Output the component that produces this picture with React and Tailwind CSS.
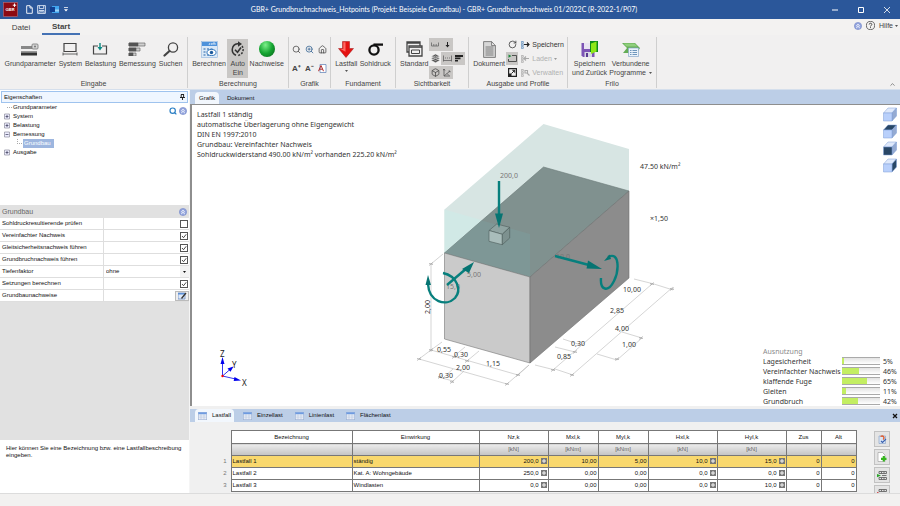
import { useState } from 'react';
import { Search, ZoomIn, House, ChevronUp, Box, RotateCw } from 'lucide-react';

const caseColumns = [
  { key: 'name', label: 'Bezeichnung', unit: '', width: 'w-[121px]', align: 'text-left' },
  { key: 'action', label: 'Einwirkung', unit: '', width: 'w-[127px]', align: 'text-left' },
  { key: 'nz', label: 'Nz,k', unit: '[kN]', width: 'w-[69px]', align: 'text-right', plus: true },
  { key: 'mx', label: 'Mxl,k', unit: '[kNm]', width: 'w-[50px]', align: 'text-right' },
  { key: 'my', label: 'Myl,k', unit: '[kNm]', width: 'w-[50px]', align: 'text-right' },
  { key: 'hx', label: 'Hxl,k', unit: '[kN]', width: 'w-[69px]', align: 'text-right', plus: true },
  { key: 'hy', label: 'Hyl,k', unit: '[kN]', width: 'w-[69px]', align: 'text-right', plus: true },
  { key: 'zus', label: 'Zus', unit: '', width: 'w-[35px]', align: 'text-right' },
  { key: 'alt', label: 'Alt', unit: '', width: 'w-[35px]', align: 'text-right' },
];

const loadCases = [
  { name: 'Lastfall 1', action: 'ständig', nz: '200,0', mx: '10,00', my: '5,00', hx: '10,0', hy: '15,0', zus: '0', alt: '0' },
  { name: 'Lastfall 2', action: 'Kat. A: Wohngebäude', nz: '250,0', mx: '0,00', my: '0,00', hx: '0,0', hy: '0,0', zus: '0', alt: '0' },
  { name: 'Lastfall 3', action: 'Windlasten', nz: '0,0', mx: '0,00', my: '0,00', hx: '0,0', hy: '10,0', zus: '0', alt: '0' },
];

const utilisation = [
  { label: 'Lagesicherheit', value: 5 },
  { label: 'Vereinfachter Nachweis', value: 46 },
  { label: 'klaffende Fuge', value: 65 },
  { label: 'Gleiten', value: 11 },
  { label: 'Grundbruch', value: 42 },
];

export default function App() {
  const [viewTab, setViewTab] = useState('Grafik');
  const [loadTab, setLoadTab] = useState('Lastfall');
  const [selected, setSelected] = useState(0);

  return (
    <div className="flex h-screen flex-col overflow-hidden bg-[#f0f0f0] font-['Liberation_Sans',sans-serif] text-[7px] leading-[9px] text-[#444]">
      <TitleBar />
      <Ribbon />
      <div className="flex min-h-0 flex-1">
        <Sidebar />
        <main className="flex min-w-0 flex-1 flex-col">
          <div className="flex h-[14px] shrink-0 items-end bg-[#bccee7] pl-[5px] text-[6px] text-[#111]">
            {['Grafik', 'Dokument'].map((tab) => (
              <button
                key={tab}
                onClick={() => setViewTab(tab)}
                className={`mr-1 h-3 rounded-t-sm px-1 ${viewTab === tab ? 'bg-[#f2f7fd]' : ''}`}
              >
                {tab}
              </button>
            ))}
          </div>
          <Viewport />
          <div className="mt-[3px] flex h-[13px] shrink-0 items-center bg-[#bccee7] pl-[5px] pr-[2px] text-[6px] text-[#111]">
            {['Lastfall', 'Einzellast', 'Linienlast', 'Flächenlast'].map((tab) => (
              <button
                key={tab}
                onClick={() => setLoadTab(tab)}
                className={`mr-[6px] flex h-full items-center gap-[5px] rounded-t-sm px-[3px] ${loadTab === tab ? 'bg-[#f2f7fd]' : ''}`}
              >
                <TableIcon />
                {tab}
              </button>
            ))}
            <button className="ml-auto" aria-label="Schließen">
              <svg className="h-[6px] w-[6px]" viewBox="0 0 6 6" stroke="#111" strokeWidth="1.3">
                <path d="M1 1l4 4M5 1l-4 4" />
              </svg>
            </button>
          </div>
          <div className="flex h-[71px] shrink-0 justify-between overflow-hidden pl-7 pr-[10px] pt-2">
            <LoadTable selected={selected} onSelect={setSelected} />
            <RowTools />
          </div>
        </main>
      </div>
      <footer className="h-[13px] shrink-0 border-t border-[#dcdcdc] bg-[#f2f1f0]" />
    </div>
  );
}

function TitleBar() {
  return (
    <header className="flex h-[19px] shrink-0 items-center bg-[#2b579a] font-['Lato',sans-serif] text-white">
      <div className="flex w-[78px] items-center gap-1 pl-[3px]">
        <svg className="mr-1 h-[15px] w-[15px]" viewBox="0 0 15 15">
          <rect x=".5" y=".5" width="14" height="14" fill="#8d0a12" stroke="#c06a70" strokeWidth=".6" />
          <text x="2.5" y="9" fontSize="4.5" fontWeight="bold" fill="#fff">GBR</text>
          <path d="M11.5 1.5v3.4M9.8 3.2h3.4" stroke="#fff" strokeWidth="1" />
        </svg>
        <svg className="h-[9px] w-[7px]" viewBox="0 0 7 9" fill="none" stroke="#fff" strokeWidth=".9">
          <path d="M.7.7h3.4l2.2 2.2v5.4H.7zM4 .8V3h2.2" />
        </svg>
        <svg className="h-[9px] w-[9px]" viewBox="0 0 9 9" fill="none" stroke="#dce6f5" strokeWidth=".9">
          <path d="M.6.6h7.8v7.8H.6zM2.3.6v3h4.4v-3M2 8.4V5.5h5v2.9M3 6.8h3" />
        </svg>
        <svg className="h-[9px] w-[9px]" viewBox="0 0 9 9">
          <rect x="2" y="1" width="7" height="7" fill="#41a5ee" />
          <rect x="2" y="4.5" width="7" height="2" fill="#9bd3f8" />
          <rect y="2" width="5" height="5" fill="#103f91" />
        </svg>
        <svg className="ml-px h-[5px] w-[4px]" viewBox="0 0 4 5" fill="#fff">
          <path d="M0 .3h4v.8H0zM0 2.2h4L2 4.5z" />
        </svg>
      </div>
      <h1 className="flex-1 text-center text-[7px]">
        GBR+ Grundbruchnachweis_Hotpoints (Projekt: Beispiele Grundbau) - GBR+ Grundbruchnachweis 01/2022C (R-2022-1/P07)
      </h1>
      <div className="flex w-[90px] items-center justify-end gap-5 pr-[10px]">
        <button aria-label="Minimieren"><svg className="h-[6px] w-[6px]" viewBox="0 0 6 6" stroke="#fff"><path d="M0 3h6" /></svg></button>
        <button aria-label="Maximieren"><svg className="h-[6px] w-[6px]" viewBox="0 0 6 6" fill="none" stroke="#fff"><path d="M.5.5h5v5h-5z" /></svg></button>
        <button aria-label="Schließen"><svg className="h-[6px] w-[6px]" viewBox="0 0 6 6" stroke="#fff" strokeWidth=".8"><path d="M0 0l6 6M6 0L0 6" /></svg></button>
      </div>
    </header>
  );
}

function Group({ label, width, children }) {
  return (
    <section className={`flex h-[51px] shrink-0 flex-col justify-between border-r border-[#cfcfcf] ${width}`}>
      <div className="flex flex-1 items-start justify-around px-[3px] pt-px">{children}</div>
      <h2 className="text-center">{label}</h2>
    </section>
  );
}

function BigButton({ lines, icon, active, arrow }) {
  return (
    <button className={`mt-px flex h-[39px] flex-col items-center whitespace-nowrap px-[1px] ${active ? 'w-[21px] bg-[#c9c7c5]' : ''}`}>
      <span className="flex h-5 items-center justify-center">{icon}</span>
      {lines.map((line, i) => (
        <span key={line} className="flex items-center gap-[3px]">
          {line}
          {arrow === 'inline' && i === lines.length - 1 && <Caret />}
        </span>
      ))}
      {arrow === 'below' && <span className="mt-[2px]"><Caret /></span>}
    </button>
  );
}

function Caret({ color = '#555' }) {
  return <svg className="h-[2px] w-[3px]" viewBox="0 0 3 2" fill={color}><path d="M0 0h3L1.5 2z" /></svg>;
}

function Ribbon() {
  return (
    <>
      <nav className="flex h-4 shrink-0 items-end bg-[#f3f2f1] pl-1 text-[8px]">
        <button className="h-full w-[34px]">Datei</button>
        <button className="ml-1 h-full w-[38px] border-b-2 border-[#4472b4] font-bold">Start</button>
        <div className="ml-auto flex items-center gap-1 self-start pr-[2px] pt-[2px] text-[7px]">
          <CollapseIcon />
          <svg className="h-[9px] w-[9px]" viewBox="0 0 9 9" fill="none" stroke="#333" strokeWidth=".7">
            <circle cx="4.5" cy="4.5" r="4.1" />
            <path d="M3.2 3.5c0-1.7 2.6-1.7 2.6 0 0 1-1.3 1-1.3 2M4.5 6.2v.9" strokeWidth=".9" />
          </svg>
          <a href="#hilfe" className="flex items-center gap-[2px]">Hilfe <Caret /></a>
        </div>
      </nav>
      <div className="flex h-[55px] shrink-0 items-start border-b border-[#d5dfec] bg-[#f1f0f0] pt-[2px]">
        <Group label="Eingabe" width="w-[188px]">
          <BigButton lines={['Grundparameter']} icon={<ParamIcon />} />
          <BigButton lines={['System']} icon={<SystemIcon />} />
          <BigButton lines={['Belastung']} icon={<LoadIcon />} />
          <BigButton lines={['Bemessung']} icon={<DesignIcon />} />
          <BigButton
            lines={['Suchen']}
            icon={
              <svg className="h-[15px] w-4" viewBox="0 0 16 15" fill="none" stroke="#444">
                <circle cx="10" cy="5.5" r="4.6" strokeWidth="1.3" />
                <path d="M6.5 9L1.5 13.5" strokeWidth="2.2" strokeLinecap="round" />
              </svg>
            }
          />
        </Group>
        <Group label="Berechnung" width="w-[101px]">
          <BigButton lines={['Berechnen']} icon={<CalcIcon />} />
          <BigButton lines={['Auto', 'Ein']} icon={<AutoIcon />} active />
          <BigButton
            lines={['Nachweise']}
            icon={<span className="h-4 w-4 rounded-full bg-radial-[at_40%_25%] from-[#7df08a] via-[#16a532] to-[#065c17]" />}
          />
        </Group>
        <Group label="Grafik" width="w-[42px]">
          <div className="grid grid-cols-3 gap-x-1 gap-y-[10px] pt-[7px] text-[#444]">
            <button aria-label="Zoom"><Search className="h-[9px] w-[9px]" /></button>
            <button aria-label="Vergrößern"><ZoomIn className="h-[9px] w-[9px]" color="#2f5f8f" /></button>
            <button aria-label="Gesamtansicht"><House className="h-[9px] w-[9px]" /></button>
            <button className="text-left text-[8px] font-bold leading-[8px]">A⁺</button>
            <button className="text-left text-[8px] font-bold leading-[8px]">A⁻</button>
            <button aria-label="Schrift">
              <svg className="h-[9px] w-[9px]" viewBox="0 0 9 9" fill="none">
                <path d="M2 .5h6v8H2z" fill="#fff" stroke="#5a7cb5" strokeWidth=".7" />
                <path d="M.5 7.2L3 1.5l2.5 5.7M1.4 5.2h3.2" stroke="#b02a2a" />
              </svg>
            </button>
          </div>
        </Group>
        <Group label="Fundament" width="w-[65px]">
          <BigButton
            lines={['Lastfall']}
            arrow="below"
            icon={
              <svg className="h-[17px] w-4" viewBox="0 0 16 17">
                <path d="M4.5.5h7v7h4L8 16.5.5 7.5h4z" fill="#e51212" stroke="#9e1414" strokeWidth=".5" />
                <path d="M5.3 1.2h2.2v9.5L2.4 8.1h2.9z" fill="#ff6a63" />
              </svg>
            }
          />
          <BigButton
            lines={['Sohldruck']}
            icon={
              <svg className="h-[14px] w-[15px]" viewBox="0 0 15 14" fill="none" stroke="#111">
                <ellipse cx="6" cy="8" rx="4.6" ry="4.6" strokeWidth="2.3" />
                <path d="M5.5 2.6H15" strokeWidth="2.3" />
              </svg>
            }
          />
        </Group>
        <Group label="Sichtbarkeit" width="w-[73px]">
          <BigButton lines={['Standard']} icon={<StandardIcon />} />
          <VisibilityGrid />
        </Group>
        <Group label="Ausgabe und Profile" width="w-[99px]">
          <BigButton lines={['Dokument']} icon={<DocIcon />} />
          <div className="flex flex-col gap-px text-[#333]">
            <ProfileRow label="Speichern" icon={<RotateCw className="h-[9px] w-[9px]" />} arrow="M3 3.5h5M6 1.5l2 2-2 2" />
            <ProfileRow label="Laden" muted caret icon={<FrameIcon />} arrow="M8 3.5H3M5 1.5l-2 2 2 2" />
            <ProfileRow label="Verwalten" muted icon={<ExpandIcon />} arrow="M4 1.5h2.5v2.5H4zM6 4l2.5 2.5" />
          </div>
        </Group>
        <Group label="Frilo" width="w-[89px]">
          <BigButton lines={['Speichern', 'und Zurück']} icon={<SaveBackIcon />} />
          <BigButton lines={['Verbundene', 'Programme']} arrow="inline" icon={<LinkedIcon />} />
        </Group>
        <button className="ml-auto mr-1 self-end pb-[1px]" aria-label="Menüband reduzieren"><ChevronUp className="h-[7px] w-[7px]" /></button>
      </div>
    </>
  );
}

function ProfileRow({ icon, label, arrow, muted, caret }) {
  const tone = muted ? '#a8a8a8' : '#222';
  return (
    <div className="flex h-[13px] items-center gap-[3px]">
      <button aria-label={`${label} Profil`} className={`flex h-[13px] w-[12px] items-center justify-center ${caret ? 'bg-[#c9c7c5]' : ''}`}>
        {icon}
      </button>
      <button className={`flex items-center gap-[2px] ${muted ? 'text-[#b0b0b0]' : ''}`}>
        <svg className="h-[8px] w-[9px]" viewBox="0 0 9 8" fill="none" stroke={tone}>
          <path d="M.3.5h2v1.7h-2zM.3 3h2v1.7h-2zM.3 5.7h2v1.7h-2z" strokeWidth=".6" stroke={muted ? '#999' : '#3c77b0'} />
          <path d={arrow} strokeWidth="1.1" />
        </svg>
        {label}
        {caret && <Caret color="#999" />}
      </button>
    </div>
  );
}

function VisibilityGrid() {
  const cell = 'flex h-[13px] w-3 items-center justify-center';
  const on = 'bg-[#c9c7c5]';
  return (
    <div className="grid grid-cols-3 gap-y-[1px] text-[#444]">
      <button aria-label="Bemaßung" className={`${cell} ${on}`}>
        <svg className="h-[5px] w-[8px]" viewBox="0 0 8 5" fill="none" stroke="#666" strokeWidth=".8"><path d="M.5.5v3.5h7V.5M2.8 2v2M5.2 2v2" /></svg>
      </button>
      <button aria-label="Lasten" className={`${cell} ${on}`}>
        <svg className="h-[6px] w-[5px]" viewBox="0 0 5 6" fill="#222"><path d="M2 0h1v3h1.5l-2 2.5-2-2.5H2z" /></svg>
      </button>
      <span />
      <button aria-label="Schichten" className={cell}>
        <svg className="h-[9px] w-[9px]" viewBox="0 0 9 9" fill="#555" stroke="#f1f0f0" strokeWidth=".5">
          <path d="M4.5 4L9 6.2 4.5 8.8 0 6.2zM4.5 2L9 4.2 4.5 6.5 0 4.2zM4.5 0L8.5 2.2 4.5 4.3.5 2.2z" />
        </svg>
      </button>
      <button aria-label="Werte" className={`${cell} ${on}`}>
        <svg className="h-[7px] w-[9px]" viewBox="0 0 9 7" fill="none" stroke="#555" strokeWidth=".7"><path d="M.5.5v6M8.5.5v6M.5 5.5h8M2 3h1M4 3h1M6 3h1" /></svg>
      </button>
      <button aria-label="Ausnutzung" className={`${cell} ${on}`}>
        <svg className="h-[7px] w-[8px]" viewBox="0 0 8 7" fill="#222"><path d="M0 0h8v2H0zM0 2.6h5.5v1.6H0zM0 5h3v1.5H0z" /></svg>
      </button>
      <button aria-label="Körper" className={`${cell} ${on}`}><Box className="h-[9px] w-[9px]" /></button>
      <button aria-label="Achsen" className={`${cell} ${on}`}>
        <svg className="h-[8px] w-[8px]" viewBox="0 0 8 8" fill="none" stroke="#555" strokeWidth=".8"><path d="M1 0v7l6-5M1 7h6M0 1.5L1 0l1 1.5M5.5 2H7v1.3M4 4.5l2 2" /></svg>
      </button>
    </div>
  );
}

function ParamIcon() {
  return (
    <svg className="h-[13px] w-[18px]" viewBox="0 0 18 13">
      <rect x="0" y="3" width="12" height="3" fill="#888" />
      <rect x="11" y="1" width="6" height="5" rx="1" fill="#d5d5d5" stroke="#777" strokeWidth=".8" />
      <circle cx="14" cy="3.5" r="1" fill="#777" />
      <rect y="8" width="16" height="1.5" fill="#999" />
      <rect y="9.5" width="16" height="3" fill="#333" />
    </svg>
  );
}

function SystemIcon() {
  return (
    <svg className="h-[14px] w-4" viewBox="0 0 16 14" fill="none" stroke="#444">
      <path d="M2 1.5h12v8H2z" strokeWidth="1.2" />
      <path d="M1 12h14M1 10.5v3M15 10.5v3" strokeWidth=".8" />
    </svg>
  );
}

function LoadIcon() {
  return (
    <svg className="h-[14px] w-4" viewBox="0 0 16 14" fill="none" stroke="#444">
      <path d="M6 4H1.5v8h13V4H10" strokeWidth="1.2" />
      <path d="M8 1v5" stroke="#0b8a83" strokeWidth="1.4" />
      <path d="M5.5 5h5L8 8.5z" fill="#0b8a83" stroke="none" />
    </svg>
  );
}

function DesignIcon() {
  return (
    <svg className="h-[14px] w-[18px]" viewBox="0 0 18 14" stroke="#555" strokeWidth=".6">
      <path d="M1 1h16v3H1zM1 6h11v3H1zM1 11h7v3H1z" fill="#d0d0d0" />
      <path d="M1 1h9v3H1zM1 6h7v3H1zM1 11h4v3H1z" fill="#555" />
    </svg>
  );
}

function CalcIcon() {
  return (
    <svg className="h-[17px] w-[17px]" viewBox="0 0 17 17">
      <rect x=".5" y=".5" width="16" height="16" fill="#dbe9f7" stroke="#8eb3dc" strokeWidth=".6" />
      <rect x="1" y="1" width="15" height="4" fill="#4e92db" />
      <path d="M8 4l1-2M10 4l1-2M12 4V2h2v2" stroke="#fff" strokeWidth=".7" fill="none" />
      <path d="M2.5 7h2v2h-2zM6 7h2v2H6zM9.5 7h2v2h-2zM2.5 10h2v2h-2zM2.5 13h2v2h-2zM6 13h2v2H6z" fill="#7fa5d0" />
      <ellipse cx="10.5" cy="11.5" rx="4.5" ry="3" fill="#fff" stroke="#2b71b8" strokeWidth="1" />
      <circle cx="10.5" cy="11.5" r="1.7" fill="#1c5a9c" />
    </svg>
  );
}

function AutoIcon() {
  return (
    <svg className="h-[16px] w-[14px]" viewBox="0 0 14 16" fill="none" stroke="#333">
      <path d="M5 14.3A6 6 0 0 1 6.5 2.8h2" strokeWidth="1.5" />
      <path d="M7 .3l4 2.7-4 2.7z" fill="#333" stroke="none" />
      <path d="M11 5a6 6 0 0 1-4.5 9.5" strokeWidth="1.5" strokeDasharray="2 1.3" />
      <path d="M4 8.7l2.5 2.5L10 6.5" strokeWidth="1.6" />
    </svg>
  );
}

function StandardIcon() {
  return (
    <svg className="h-4 w-[17px]" viewBox="0 0 17 16" stroke="#444" fill="#f1f0f0">
      <path d="M1 1h13v10H1zM1 2h13" strokeWidth="1.3" />
      <path d="M3 5h13v10H3z" strokeWidth="1.3" />
      <path d="M3 6.3h13M5.5 9h8v3.5h-8z" />
    </svg>
  );
}

function DocIcon() {
  return (
    <svg className="h-[17px] w-[13px]" viewBox="0 0 13 17" fill="#d7d7d7" stroke="#666" strokeWidth=".8">
      <path d="M.6.6h8l3.8 4v11.8H.6zM8.6.6v4h3.8" />
      <path d="M2.5 6h8M2.5 8h8M2.5 10h8M2.5 12h8M2.5 14h8" />
    </svg>
  );
}

function FrameIcon() {
  return (
    <svg className="h-[9px] w-[9px]" viewBox="0 0 9 9" fill="none" stroke="#333" strokeWidth=".8">
      <path d="M4 1.5h4.5v6h-8V5" />
      <path d="M.5.5L3.5 2 .5 3.8z" fill="#1e8a3c" stroke="none" />
    </svg>
  );
}

function ExpandIcon() {
  return (
    <svg className="h-[9px] w-[9px]" viewBox="0 0 9 9" fill="none" stroke="#222">
      <path d="M.6.6h7.8v7.8H.6z" strokeWidth="1.2" />
      <path d="M1 5.5h2.5V8H1z" fill="#222" stroke="none" />
      <path d="M3.5 5.5l3-3M4.3 2.3h2.4v2.4" strokeWidth="1" />
    </svg>
  );
}

function SaveBackIcon() {
  return (
    <svg className="h-[17px] w-[17px]" viewBox="0 0 17 17">
      <path d="M.5 2h13v14H2L.5 14.5z" fill="#7d55b5" />
      <path d="M3 2h8v6H3z" fill="#e9e4f2" />
      <path d="M3.5 11h7.5v5H3.5z" fill="#d8d8e4" />
      <path d="M5 12h2v4H5z" fill="#5a3a90" />
      <path d="M9 0h8v11H9z" fill="#0f8c1b" />
      <path d="M10 2.5L15.5.5v10L10 13z" fill="#8ee817" />
    </svg>
  );
}

function LinkedIcon() {
  return (
    <svg className="h-[15px] w-[18px]" viewBox="0 0 18 15">
      <path d="M0 1h13l5 5-3 5H1l4-5z" fill="#64ad55" />
      <path d="M1.5 1.5h11l3 3h-11z" fill="#8fcf7d" />
      <path d="M6.5 6h10v8.5h-10z" fill="#eaf2fa" stroke="#8aa9cc" strokeWidth=".7" />
      <path d="M8 8.5h1.5M8 10.5h1.5M8 12.5h1.5M10.5 8.5H15M10.5 10.5H15M10.5 12.5H15" stroke="#4d7cab" strokeWidth=".8" />
    </svg>
  );
}

function TableIcon() {
  return (
    <svg className="h-[8px] w-[9px]" viewBox="0 0 9 8">
      <rect x=".3" y=".3" width="8.4" height="7.4" fill="#f3f6fb" stroke="#9aaed0" strokeWidth=".6" />
      <rect x=".3" y=".3" width="8.4" height="2" fill="#6e9be0" />
      <path d="M.3 4h8.4M.3 5.8h8.4M3 2v5.7M6 2v5.7" stroke="#b4c2dc" strokeWidth=".6" />
    </svg>
  );
}

function CollapseIcon() {
  return (
    <svg className="h-[8px] w-[8px]" viewBox="0 0 8 8" fill="none" stroke="#fff">
      <circle cx="4" cy="4" r="3.6" fill="#93a5dd" stroke="#7387c8" strokeWidth=".6" />
      <path d="M2.2 4L4 2.3 5.8 4M2.2 6L4 4.3 5.8 6" strokeWidth=".9" />
    </svg>
  );
}

function TreeItem({ label, mark }) {
  return (
    <li className="flex h-[9px] items-center">
      {mark ? (
        <svg className="mr-[2px] h-[9px] w-[7px]" viewBox="0 0 7 9" fill="none" stroke="#8b8b9b" strokeWidth=".7">
          <path d="M.5 2h5v5h-5z" fill="#eef" />
          <path d={mark === '+' ? 'M1.5 4.5h3M3 3v3' : 'M1.5 4.5h3'} stroke="#335" />
        </svg>
      ) : (
        <span className="mr-[1px] ml-[3px] w-[5px] border-t border-dotted border-[#aaa]" />
      )}
      <button className="text-left">{label}</button>
    </li>
  );
}

function Sidebar() {
  return (
    <aside className="flex w-[190px] shrink-0 flex-col border-r border-[#f5f5f5] bg-white text-[6px] text-[#111]">
      <div className="mx-px mt-px flex h-3 shrink-0 items-center justify-between border border-[#9fc3ee] bg-[#eff6ff] px-[2px]">
        Eigenschaften
        <svg className="h-[6px] w-[5px]" viewBox="0 0 5 6" fill="none" stroke="#111" strokeWidth=".9"><path d="M1 .5h3M1.2.5v3M3.6.5v3M0 3.5h5M2.5 3.5V6" /></svg>
      </div>
      <div className="flex h-[102px] shrink-0 items-start justify-between pl-1 pr-[2px]">
        <ul>
          <TreeItem label="Grundparameter" />
          <TreeItem label="System" mark="+" />
          <TreeItem label="Belastung" mark="+" />
          <TreeItem label="Bemessung" mark="-" />
          <li className="flex h-[9px] items-center pl-[13px]">
            <span className="mr-[1px] h-[5px] w-[5px] self-start border-b border-l border-dotted border-[#aaa]" />
            <button className="h-[9px] bg-[#9db6df] pl-[1px] pr-[3px] text-white">Grundbau</button>
          </li>
          <TreeItem label="Ausgabe" mark="+" />
        </ul>
        <div className="flex items-center gap-[2px] pt-1">
          <Search className="h-[8px] w-[8px]" color="#2b7fc4" strokeWidth={3.5} />
          <CollapseIcon />
        </div>
      </div>
      <div className="flex h-[13px] shrink-0 items-center justify-between bg-[#e1e1e1] pl-[2px] pr-[2px] text-[7px] text-[#666]">
        Grundbau
        <CollapseIcon />
      </div>
      <div className="bg-[#e1e1e1]">
        <CheckRow id="sohl" label="Sohldruckresultierende prüfen" />
        <CheckRow id="vereinf" label="Vereinfachter Nachweis" on />
        <CheckRow id="gleit" label="Gleitsicherheitsnachweis führen" on />
        <CheckRow id="grund" label="Grundbruchnachweis führen" on />
        <PropRow id="tiefe" label="Tiefenfaktor">
          <span className="relative flex flex-1 items-center">
            <select id="tiefe" className="h-full w-full appearance-none bg-transparent pl-[2px]" defaultValue="ohne">
              <option>ohne</option>
              <option>mit</option>
            </select>
            <span className="pointer-events-none absolute right-0 flex h-full w-[9px] items-center justify-center bg-[#f3f3f3]"><Caret color="#111" /></span>
          </span>
        </PropRow>
        <CheckRow id="setz" label="Setzungen berechnen" on />
        <PropRow id="nachweise" label="Grundbaunachweise">
          <button id="nachweise" className="ml-auto flex h-[10px] w-[14px] items-center justify-center self-center border border-[#bbb] bg-[#eee]">
            <svg className="h-[8px] w-[9px]" viewBox="0 0 9 8">
              <path d="M0 1h7v6H0z" fill="#dfe9f7" stroke="#5b83bd" strokeWidth=".7" />
              <path d="M0 1h7v1.5H0z" fill="#5b8fd6" />
              <path d="M3.5 6.5L8 1" stroke="#333" strokeWidth="1.3" />
            </svg>
          </button>
        </PropRow>
      </div>
      <div className="min-h-0 flex-1 bg-[#e1e1e1]" />
      <p className="h-[53px] shrink-0 px-[6px] pt-[5px] leading-[7px]">
        Hier können Sie eine Bezeichnung bzw. eine Lastfallbeschreibung eingeben.
      </p>
    </aside>
  );
}

function PropRow({ id, label, children }) {
  return (
    <div className="flex h-3 border-b border-[#dedede] bg-white">
      <label htmlFor={id} className="flex w-[104px] shrink-0 items-center whitespace-nowrap border-r border-[#dedede] pl-[2px]">{label}</label>
      {children}
    </div>
  );
}

function CheckRow({ id, label, on = false }) {
  return (
    <PropRow id={id} label={label}>
      <span className="relative mr-px ml-auto flex h-2 w-2 self-center">
        <input id={id} type="checkbox" defaultChecked={on} className="peer h-2 w-2 appearance-none border border-[#555] bg-white" />
        <svg className="pointer-events-none absolute inset-0 hidden h-2 w-2 peer-checked:block" viewBox="0 0 8 8" fill="none" stroke="#333" strokeWidth=".9">
          <path d="M2 4l1.5 1.7L6.2 2.3" />
        </svg>
      </span>
    </PropRow>
  );
}

const cubeViews = [
  { name: 'Isometrie', top: '#dfe9fb', front: '#b9d0fb', side: '#94aad2' },
  { name: 'Draufsicht', top: '#294766', front: '#b9d0fb', side: '#94aad2' },
  { name: 'Vorderansicht', top: '#dfe9fb', front: '#294766', side: '#94aad2' },
  { name: 'Seitenansicht', top: '#dfe9fb', front: '#b9d0fb', side: '#294766' },
];

function Viewport() {
  return (
    <div className="relative min-h-0 flex-1 border-l-2 border-t border-[#8e8e8e] bg-white font-['Noto_Sans',sans-serif] text-[#333]">
      <Foundation />
      <div className="absolute left-[5px] top-[5px] leading-[10px]">
        <p>Lastfall 1 ständig</p>
        <p>automatische Überlagerung ohne Eigengewicht</p>
        <p>DIN EN 1997:2010</p>
        <p>Grundbau: Vereinfachter Nachweis</p>
        <p>Sohldruckwiderstand 490.00 kN/m² vorhanden 225.20 kN/m²</p>
      </div>
      <div className="absolute right-[3px] top-[2px] flex flex-col gap-[2px]">
        {cubeViews.map((cube) => (
          <button key={cube.name} aria-label={cube.name}>
            <svg className="h-[15px] w-[14px]" viewBox="0 0 14 15" stroke="#7f9fd6" strokeWidth=".5">
              <path d="M.5 6L5 1h8.5L9 6z" fill={cube.top} />
              <path d="M9 6l4.5-5v8L9 14z" fill={cube.side} />
              <path d="M.5 6H9v8H.5z" fill={cube.front} />
            </svg>
          </button>
        ))}
      </div>
      <div className="absolute bottom-0 right-[3px] w-[134px]">
        <p className="leading-[8px] text-[#8a8a8a]">Ausnutzung</p>
        {utilisation.map((u) => (
          <div key={u.label} className="flex h-[10px] items-center">
            <span className="w-[79px] whitespace-nowrap">{u.label}</span>
            <span className="h-2 w-[38px] border-y border-[#aaa] bg-linear-to-b from-[#e3e3e3] to-white">
              <span className="block h-full bg-[#c3ee62]" style={{ width: `${u.value}%` }} />
            </span>
            <span className="ml-[3px]">{u.value}%</span>
          </div>
        ))}
      </div>
    </div>
  );
}

// line and arrow geometry of the foundation, isometric view
const dimensionLines = [
  'M431 263v89', 'M431 264l12-10', 'M431 350l11-8', 'M431 350l87 25',
  'M419 359l88 25', 'M419 359l12-9', 'M453 357l12-10', 'M467 361l12-10', 'M518 375l11-10', 'M507 384l22-19',
  'M438 377l15 4M443 378l10-9M452 382l12-11',
  'M553 370l99-86M572 375l101-88', 'M535 365l20 5M555 369l18 6', 'M634 279l20 5l19 6',
  'M555 347l20 5M563 339l18 6', 'M597 354l20 6l25-22l-20-6',
];
const ticks = [
  [431, 264], [431, 350], [419, 359], [454, 357], [467, 361], [518, 375], [507, 384], [440, 377], [452, 382],
  [553, 370], [572, 375], [652, 284], [672, 289], [575, 352], [617, 359], [641, 338],
];
const dimensionTexts = [
  ['0,55', 437, 352], ['0,30', 454, 357], ['1,15', 486, 366], ['2,00', 456, 370], ['0,30', 439, 378],
  ['10,00', 623, 292], ['2,85', 610, 313], ['4,00', 615, 331], ['0,30', 571, 346], ['0,85', 557, 359], ['1,00', 622, 347],
];

function Foundation() {
  return (
    <svg className="absolute inset-0 h-full w-full" viewBox="192 105 708 301" fontSize="7" fill="none">
      <path d="M444.5 209.5L543.5 124 629 149v43l-99 85-85.5-24z" fill="#d7e5e3" />
      <path d="M444.5 209.5L530 234v43l-85.5-24z" fill="#d1e9e6" />
      <path d="M444.5 253L543.5 167 629 191l-99 86z" fill="#80918f" stroke="#6c7b79" strokeWidth=".6" />
      <path d="M444.5 253L482 220.5 530 234v43z" fill="#7e9796" />
      <path d="M444.5 253L530 277v86l-85.5-24z" fill="#cacaca" stroke="#777" strokeWidth=".6" />
      <path d="M530 277l99-86v87l-99 85z" fill="#8c8c8c" stroke="#6e6e6e" strokeWidth=".6" />

      <path d="M489 230.5l7.7-6.5 13 3.3-7.4 7z" fill="#8fa3a1" stroke="#4d5c5b" strokeWidth=".6" />
      <path d="M489 230.5l13.3 3.8v10.4L489 241.3z" fill="#a9bdbb" stroke="#4d5c5b" strokeWidth=".6" />
      <path d="M502.3 234.3l7.4-7V238l-7.4 6.7z" fill="#7d918f" stroke="#4d5c5b" strokeWidth=".6" />

      <g stroke="#b9b9b9" strokeWidth=".6">
        {dimensionLines.map((d) => <path key={d} d={d} />)}
        {ticks.map(([x, y]) => <path key={`${x}-${y}`} d={`M${x - 2} ${y + 1.5}l4-3M${x - 2} ${y - 0.6}l4 1.2`} stroke="#999" />)}
      </g>

      <g fill="#777">
        <text x="500" y="178">200,0</text>
        <text x="467" y="277">5,00</text>
        <text x="446" y="289">15,0</text>
        <text x="556" y="259">10,0</text>
      </g>
      <g fill="#333">
        {dimensionTexts.map(([t, x, y]) => <text key={`${x}-${y}`} x={x} y={y}>{t}</text>)}
        <text transform="translate(430 314) rotate(-90)">2,00</text>
        <text x="640" y="169">47.50 kN/m²</text>
        <text x="650" y="221">×1,50</text>
      </g>

      <g stroke="#077f7d" strokeWidth="2.4">
        <path d="M499 181v34" />
        <path d="M447 285l20-17" />
        <path d="M555 256l34 9" />
        <path d="M443 273c14 3 19 17 12 25-9 9-26 4-27-14" />
        <path d="M608 257c12-6 11 14 6 24-6 12-14 9-13-3" />
      </g>
      <g fill="#067472">
        <path d="M495 213.5h8L499 228z" />
        <path d="M462 269l12-7-5 11z" />
        <path d="M588 260.500l14 8.500-15.500-.5z" />
        <path d="M428 275l3 10h-5.5z" />
        <path d="M604 261l5.5-6.5 1.5 4.500z" />
      </g>

      <g stroke="#0000ee" strokeWidth=".8">
        <path d="M222.5 376v-12M222.5 376l8-7M222.5 376l13 3" />
        <g fill="#0000ee" stroke="none">
          <path d="M222.5 357l-2 7h4zM233.5 366.5l-6 2 3 3.2zM241 380.5l-6.5-3.5-.8 4z" />
        </g>
      </g>
      <circle cx="222.5" cy="376" r="1.2" fill="#f00" />
      <g fill="#222" fontSize="8">
        <text x="220" y="357">Z</text>
        <text x="232" y="368">Y</text>
        <text x="242" y="386">X</text>
      </g>
    </svg>
  );
}

function LoadTable({ selected, onSelect }) {
  return (
    <table className="h-[61px] w-[637px] shrink-0 table-fixed border-collapse text-[6px] text-[#111]">
      <thead>
        <tr className="h-[13px]">
          <td className="w-[13px]" />
          {caseColumns.map((col) => (
            <th key={col.key} className={`border border-[#777] bg-white p-0 font-normal ${col.width}`}>{col.label}</th>
          ))}
        </tr>
        <tr className="h-3">
          <td />
          {caseColumns.map((col) => (
            <th key={col.key} className="border border-[#777] bg-linear-to-b from-[#ececec] to-[#c3c3c3] p-0 font-normal text-[#666]">{col.unit}</th>
          ))}
        </tr>
      </thead>
      <tbody>
        {loadCases.map((row, i) => (
          <tr key={row.name} className="h-3" onClick={() => onSelect(i)}>
            <td className="p-0 pr-1 text-right text-[#777]">{i + 1}</td>
            {caseColumns.map((col) => (
              <td key={col.key} className={`whitespace-nowrap border border-[#777] px-[1px] py-0 ${col.align} ${selected === i ? 'bg-[#f9d86d]' : 'bg-white'}`}>
                {row[col.key]}
                {col.plus && (
                  <svg className="ml-[2px] inline h-[6px] w-[6px] align-[-1px]" viewBox="0 0 6 6">
                    <path d="M0 0h6v6H0z" fill="#777" />
                    <path d="M3 1v4M1 3h4" stroke="#fff" strokeWidth=".9" />
                  </svg>
                )}
              </td>
            ))}
          </tr>
        ))}
      </tbody>
    </table>
  );
}

function RowTools() {
  const btn = 'flex h-4 w-4 shrink-0 items-center justify-center border border-[#c2c2c2] bg-[#e4e4e4]';
  return (
    <div className="flex flex-col gap-[2px] pt-px">
      <button className={btn} aria-label="Einfügen">
        <svg className="h-[9px] w-[9px]" viewBox="0 0 9 9">
          <path d="M1 1h6.5v7.5H1z" fill="#d9e5f5" stroke="#7f9cc4" strokeWidth=".6" />
          <path d="M2.5 1.5c3-1.5 4.5 1.5 2.5 3" stroke="#e0592a" strokeWidth="1.3" fill="none" />
          <path d="M3 6l1.5 1.5L8 4" stroke="#3c62b0" strokeWidth="1.2" fill="none" />
        </svg>
      </button>
      <button className={btn} aria-label="Neu">
        <svg className="h-[10px] w-[10px]" viewBox="0 0 10 10">
          <path d="M1 .5h4.5L8 3v6.5H1z" fill="#fff" stroke="#999" strokeWidth=".6" />
          <path d="M6.8 4v5.5M4 6.8h5.5" stroke="#35b51e" strokeWidth="2.2" />
        </svg>
      </button>
      <button className={btn} aria-label="Zeile einfügen">
        <RowIcon color="#2ba32b" />
      </button>
      <button className={btn} aria-label="Zeile löschen">
        <RowIcon color="#d03030" />
      </button>
    </div>
  );
}

function RowIcon({ color }) {
  return (
    <svg className="h-[9px] w-[10px]" viewBox="0 0 10 9" fill="none" stroke="#666" strokeWidth=".9">
      <path d="M2 .5h7.5v2H2zM4.5.5v2M7 .5v2M5 4.5h4.5M2 6.5h7.5v2H2zM4.5 6.5v2M7 6.5v2" />
      <path d="M0 3l4 1.6L0 6.2z" fill={color} stroke="none" />
    </svg>
  );
}
